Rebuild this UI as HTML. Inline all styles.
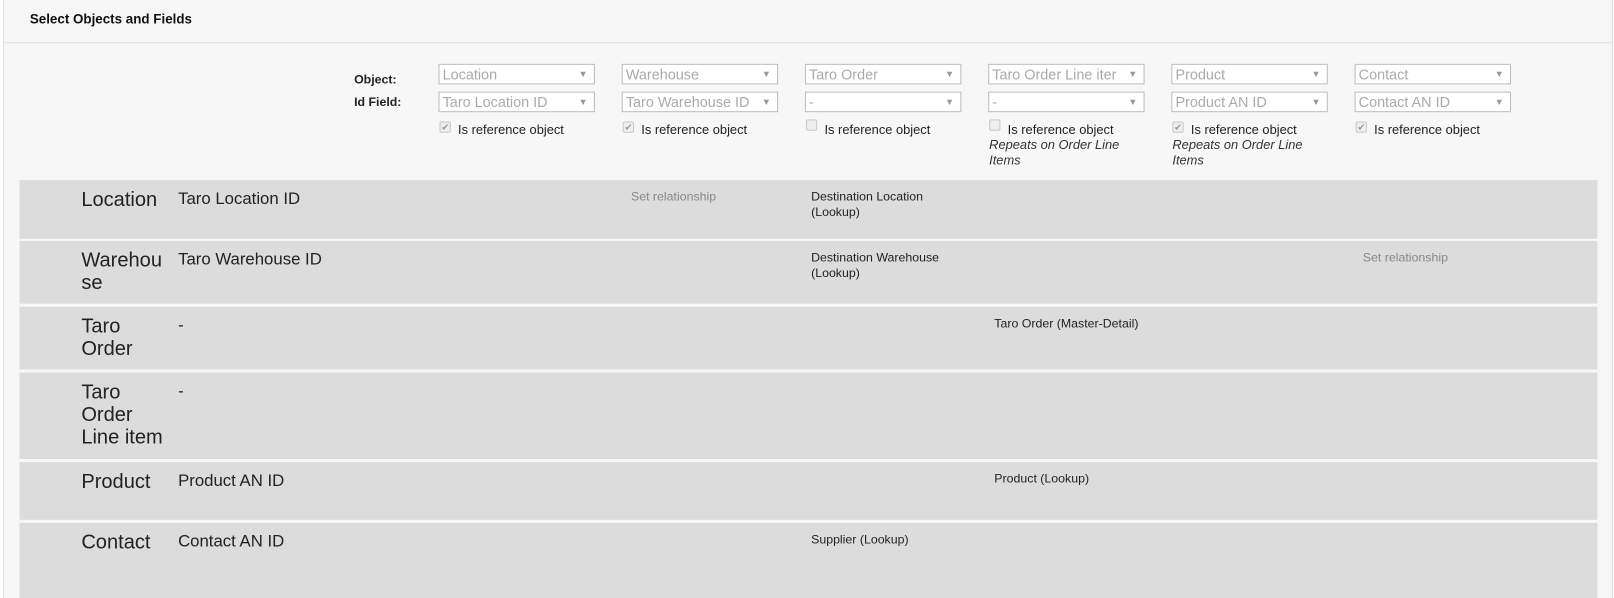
<!DOCTYPE html>
<html><head><meta charset="utf-8"><style>
*{margin:0;padding:0;box-sizing:border-box}
body{width:1614px;height:581px;background:#fff;font-family:"Liberation Sans",Arial,sans-serif;position:relative;overflow:hidden}
#wrap{position:absolute;left:0;top:0;width:1568px;height:565px;transform:scale(1.0293);transform-origin:0 0}
#panel{position:absolute;left:3px;top:0;width:1564px;height:581px;background:#f7f7f7;border-left:1px solid #e0e0e0;border-right:1px solid #e0e0e0}
#hdr{position:absolute;left:0;top:0;width:100%;height:42px;border-bottom:1px solid #e0e0e0}
#hdr span{position:absolute;left:25px;top:11px;font-size:13px;font-weight:bold;color:#111}
.a{position:absolute;white-space:nowrap}
.lbl{font-size:12px;font-weight:bold;color:#222}
.sel{position:absolute;width:152px;height:20px;border:1px solid #bdbdbd;background:#fff;color:#aaa;font-size:14px;line-height:18px;padding-left:3px;overflow:hidden;white-space:nowrap}
.sel:after{content:"▼";position:absolute;right:6px;top:0;font-size:9px;color:#999}
.cb{position:absolute;font-size:12.5px;color:#222;line-height:15px}
.cb i{display:inline-block;width:11px;height:11px;border:1px solid #c8c8c8;background:#eee;border-radius:2px;margin-right:7px;vertical-align:-1px;position:relative;top:-4px;font-style:normal;font-size:9px;color:#999;text-align:center;line-height:10px}
.cb em{display:block;font-size:12.5px;color:#333}
.row{position:absolute;left:15px;width:1533px;background:#dcdcdc}
.nm{position:absolute;left:60px;font-size:19.5px;color:#222;line-height:22px;width:85px}
.id{position:absolute;left:154px;font-size:16.3px;color:#222}
.rel{position:absolute;font-size:12px;color:#222;line-height:15px}
.set{position:absolute;font-size:12px;color:#888}
</style></head><body>
<div id="wrap">
<div id="panel">
<div id="hdr"><span>Select Objects and Fields</span></div>
<div class="a lbl" style="left:340px;top:70px">Object:</div>
<div class="a lbl" style="left:340px;top:92px">Id Field:</div>

<div class="sel" style="left:422px;top:62px">Location</div>
<div class="sel" style="left:600px;top:62px">Warehouse</div>
<div class="sel" style="left:778px;top:62px">Taro Order</div>
<div class="sel" style="left:956px;top:62px">Taro Order Line iter</div>
<div class="sel" style="left:1134px;top:62px">Product</div>
<div class="sel" style="left:1312px;top:62px">Contact</div>

<div class="sel" style="left:422px;top:89px">Taro Location ID</div>
<div class="sel" style="left:600px;top:89px">Taro Warehouse ID</div>
<div class="sel" style="left:778px;top:89px">-</div>
<div class="sel" style="left:956px;top:89px">-</div>
<div class="sel" style="left:1134px;top:89px">Product AN ID</div>
<div class="sel" style="left:1312px;top:89px">Contact AN ID</div>

<div class="cb" style="left:423px;top:119px"><i>✔</i>Is reference object</div>
<div class="cb" style="left:601px;top:119px"><i>✔</i>Is reference object</div>
<div class="cb" style="left:779px;top:119px"><i></i>Is reference object</div>
<div class="cb" style="left:957px;top:119px"><i></i>Is reference object<em>Repeats on Order Line<br>Items</em></div>
<div class="cb" style="left:1135px;top:119px"><i>✔</i>Is reference object<em>Repeats on Order Line<br>Items</em></div>
<div class="cb" style="left:1313px;top:119px"><i>✔</i>Is reference object</div>

<div class="row" style="top:175px;height:57px"><div class="nm" style="top:8px">Location</div><div class="id" style="top:9px">Taro Location ID</div>
<div class="set" style="left:594px;top:9px">Set relationship</div><div class="rel" style="left:769px;top:9px">Destination Location<br>(Lookup)</div></div>
<div class="row" style="top:234px;height:61px"><div class="nm" style="top:8px">Warehou<br>se</div><div class="id" style="top:9px">Taro Warehouse ID</div>
<div class="rel" style="left:769px;top:9px">Destination Warehouse<br>(Lookup)</div><div class="set" style="left:1305px;top:9px">Set relationship</div></div>
<div class="row" style="top:298px;height:61px"><div class="nm" style="top:8px">Taro<br>Order</div><div class="id" style="top:9px">-</div>
<div class="rel" style="left:947px;top:9px">Taro Order (Master-Detail)</div></div>
<div class="row" style="top:362px;height:84px"><div class="nm" style="top:8px">Taro<br>Order<br>Line item</div><div class="id" style="top:9px">-</div></div>
<div class="row" style="top:449px;height:56px"><div class="nm" style="top:8px">Product</div><div class="id" style="top:9px">Product AN ID</div>
<div class="rel" style="left:947px;top:9px">Product (Lookup)</div></div>
<div class="row" style="top:508px;height:73px"><div class="nm" style="top:8px">Contact</div><div class="id" style="top:9px">Contact AN ID</div>
<div class="rel" style="left:769px;top:9px">Supplier (Lookup)</div></div>
</div>
</div>
</body></html>
